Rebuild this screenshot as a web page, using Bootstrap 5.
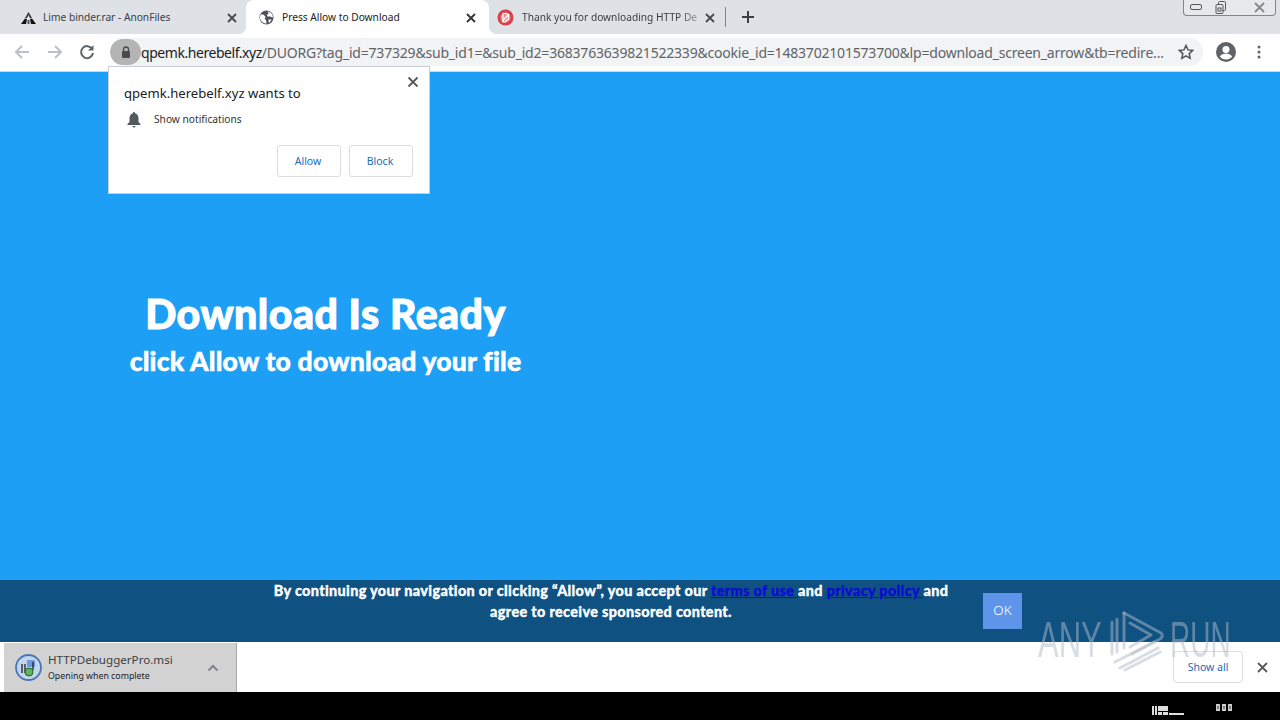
<!DOCTYPE html>
<html lang="en">
<head>
<meta charset="utf-8">
<title>Press Allow to Download</title>
<link href="https://cdn.jsdelivr.net/npm/bootstrap@5.3.0/dist/css/bootstrap.min.css" rel="stylesheet">
<script src="https://cdn.jsdelivr.net/npm/bootstrap@5.3.0/dist/js/bootstrap.bundle.min.js"></script>
<style>
html,body{height:720px;overflow:hidden;margin:0}
body{font-family:"Noto Sans","Liberation Sans",sans-serif;color:#333;background:#000}
.shell{width:1280px;height:720px}
.tabstrip{height:34px;background:#dee1e6;padding-left:8px}
.tabitem{height:34px;font-size:10.2px;color:#3c4043;white-space:nowrap;padding-top:1px}
.tabitem svg{flex:none}
.tab-a{width:238px;padding:1px 9px 0 12px}
.tab-a .tab-title{margin-left:6px}
.tab-b{width:243px;padding:1px 13px 0 13px;background:#fff;border-radius:8px 8px 0 0;color:#202124;position:relative}
.tab-b::before,.tab-b::after{content:"";position:absolute;bottom:0;width:8px;height:8px}
.tab-b::before{left:-8px;background:radial-gradient(circle at 0 0,#dee1e6 8px,#fff 8.500px)}
.tab-b::after{right:-8px;background:radial-gradient(circle at 100% 0,#dee1e6 8px,#fff 8.500px)}
.tab-c{width:233px;padding:1px 7px 0 8px}
.tab-title{flex:1;margin-left:7px;min-width:0}
.tab-b .tab-title{margin-left:8px}
.tab-c .tab-title{-webkit-mask-image:linear-gradient(90deg,#000 86%,rgba(0,0,0,.15));mask-image:linear-gradient(90deg,#000 86%,rgba(0,0,0,.15));margin-left:8px}
.tabsep{width:1px;height:20px;background:#80868b;margin:0 15px 0 3px}
.winctl{width:93px;height:16px;margin-left:auto;margin-right:4px;border:1px solid #80868b;border-top:0;border-radius:0 0 4px 4px;align-self:flex-start;background:#e6e8ec;padding-left:6px}
.winctl svg{display:block}
.wc1{margin-right:13px}
.wc2{margin-right:26px}
.toolbar{height:38px;background:#fff;padding:4px 0 5px 13px;border-bottom:1px solid #d3d5d9}
.navbtns{width:97px;gap:12px}
.navbtns svg:last-child{margin-left:2px}
.omni{width:1093px;height:28px;background:#f1f3f4;border-radius:14px;font-size:14px;white-space:nowrap;overflow:hidden;color:#5f6368}
.lockpill{width:31px;height:26px;background:#b4b4b4;border-radius:13px;flex:none}
.urltext{flex:1;min-width:0;letter-spacing:-.2px}
.urltext b{font-weight:400;color:#202124;letter-spacing:-.45px}
.omni svg{flex:none}
.starbox{margin:0 9px 0 6px}
.tbright{margin-left:13px;gap:21px}
.pagearea{flex:1;background:#1c9ff5;min-height:0;position:relative}
.heroarea{flex:1;padding:220px 0 0 129px}
.heroinner{width:393px;text-align:center;color:#fff;font-family:Lato,"Open Sans",sans-serif;font-weight:900}
.heroone{font-size:41px;line-height:44px;margin:0;font-weight:900;letter-spacing:.5px;white-space:nowrap;-webkit-text-stroke:1px #fff}
.herotwo{font-size:26.5px;line-height:30px;margin:10px 0 0;font-weight:900;white-space:nowrap;letter-spacing:.2px;-webkit-text-stroke:.5px #fff}
.consent{height:62px;background:#0f5282;color:#fff;position:relative}
.consenttext{width:690px;margin-left:266px;text-align:center;font-family:Lato,sans-serif;font-weight:900;font-size:14.4px;line-height:21px;letter-spacing:.35px;align-self:flex-start;-webkit-text-stroke:.3px currentColor}
.consenttext a{color:#0b0bd6}
.okbtn{width:39px;height:36px;background:#5e95ea;color:#fff;font-size:13.5px;font-weight:300;border:0;border-radius:0;margin-left:27px;padding:0 0 2px;font-family:"Noto Sans",sans-serif}
.permpop{position:absolute;left:108px;top:-6px;width:322px;height:128px;background:#fff;border:1px solid #c8cdd2;z-index:3}
.permtitle{font-size:13.1px;color:#202124;position:absolute;left:15px;top:16px;line-height:20px;white-space:nowrap}
.permrow{position:absolute;left:17px;top:44px;font-size:10.2px;color:#333;gap:12px;line-height:17px}
.permclose{position:absolute;right:10px;top:9px}
.permbtns{position:absolute;right:16px;top:78px;gap:8px}
.pbtn{width:64px;height:32px;padding:1px 2px 0 0;border:1px solid #dadce0;border-radius:3px;background:#fff;color:#1a6bb8;font-size:10.5px}
.wmark{position:absolute;left:1037px;top:608px;width:200px;height:70px;z-index:5;pointer-events:none}
.wmarktext{font-family:"Liberation Sans",sans-serif;font-size:50px;color:rgba(175,188,200,.5);line-height:50px;position:absolute;top:7px;white-space:nowrap;transform-origin:left}
.wmark-any{left:1px;transform:scaleX(.62)}
.wmark-run{left:133px;transform:scaleX(.56)}
.wmark svg{position:absolute;left:73px;top:2px}
.dlbar{height:50px;background:#fff;position:relative}
.dlchip{width:233px;height:49px;margin-left:4px;background:#d2d2d2;border-right:1px solid #aaa;padding-left:11px;gap:6px;align-self:flex-start;margin-top:1px}
.dlname{font-size:11.6px;color:#3c4043;line-height:16px}
.dlsub{font-size:8.8px;color:#202124;line-height:13px;margin-top:2px}
.dlcaret{margin-left:auto;margin-right:17px}
.showall{width:70px;height:32px;padding:1px 0 0;border:1px solid #dadce0;border-radius:4px;background:#fff;color:#1a6bb8;font-size:10.5px;margin-left:auto;margin-right:14px}
.dlx{margin-right:12px}
.taskbar{height:28px;background:#000;position:relative}
.tray1{position:absolute;left:1152px;top:14px;width:32px;height:9px}
.tray2{position:absolute;left:1216px;top:11px;width:16px;height:9px}
</style>
</head>
<body>
<div class="shell d-flex flex-column">
  <div class="tabstrip d-flex align-items-center">
    <div class="tabitem tab-a d-flex align-items-center">
      <svg width="17" height="14" viewBox="0 0 17 14"><path d="M8.500 1 L12 7 L10 7 L8.500 4 L7 7 L5 7Z" fill="#333"/><path d="M1 13 L5 7.500 L7 8 L6 13Z M11 13 L10 8 L12 7.500 L16 13Z" fill="#111"/><path d="M7.500 13V9h2v4z" fill="#555"/></svg>
      <span class="tab-title">Lime binder.rar - AnonFiles</span>
      <svg width="10" height="10" viewBox="0 0 10 10"><path d="M1 1l8 8M9 1l-8 8" stroke="#45494d" stroke-width="1.800"/></svg>
    </div>
    <div class="tabitem tab-b d-flex align-items-center">
      <svg width="15" height="15" viewBox="0 0 16 16"><circle cx="8" cy="8" r="7.500" fill="#4f5357"/><path d="M2 4.500l3 .5 2 2.500-1 1.500 1.500 2 .5 3.500C4.500 14.500 1 11.500 1 8c0-1 .3-2.500 1-3.500zM9 1.500l1.500 2-2 1.500.5 2h3l1 .5 1.800.5c.2-3.500-2-6-5.800-6.500zM10.500 10h3l-2.500 3.500-1-1z" fill="#fff"/></svg>
      <span class="tab-title">Press Allow to Download</span>
      <svg width="10" height="10" viewBox="0 0 10 10"><path d="M1 1l8 8M9 1l-8 8" stroke="#303336" stroke-width="1.800"/></svg>
    </div>
    <div class="tabitem tab-c d-flex align-items-center">
      <svg width="17" height="17" viewBox="0 0 17 17"><circle cx="8.500" cy="8.500" r="8" fill="#d8404a"/><circle cx="8.500" cy="8.500" r="5" fill="#ee8f96"/><path d="M6 4.500h3.500l2 2V10L8 13H6z" fill="none" stroke="#fff" stroke-width="1.200"/><path d="M5 12.500L12 5" stroke="#fff" stroke-width="1.300"/></svg>
      <span class="tab-title">Thank you for downloading HTTP De</span>
      <svg width="10" height="10" viewBox="0 0 10 10"><path d="M1 1l8 8M9 1l-8 8" stroke="#45494d" stroke-width="1.800"/></svg>
    </div>
    <div class="tabsep"></div>
    <svg width="14" height="14" viewBox="0 0 14 14"><path d="M7 1v12M1 7h12" stroke="#3c4043" stroke-width="2"/></svg>
    <div class="winctl d-flex align-items-center">
      <svg class="wc1" width="12" height="7" viewBox="0 0 12 7"><rect x=".5" y=".5" width="11" height="5" rx="1.500" fill="none" stroke="#555"/></svg>
      <svg class="wc2" width="12" height="13" viewBox="0 0 12 13"><rect x="3.500" y=".5" width="7" height="9" rx="1" fill="none" stroke="#555"/><rect x="1" y="3.500" width="7" height="9" rx="1" fill="#e6e8ec" stroke="#555"/><rect x="3" y="7" width="3" height="3" fill="none" stroke="#555"/></svg>
      <svg width="13" height="11" viewBox="0 0 13 11"><path d="M2 1l9 9M11 1l-9 9" stroke="#888" stroke-width="1.800"/></svg>
    </div>
  </div>
  <div class="toolbar d-flex align-items-center">
    <div class="navbtns d-flex align-items-center">
      <svg width="20" height="16" viewBox="0 0 20 16"><path d="M16 8H3M9 2L3 8l6 6" fill="none" stroke="#bcc0c4" stroke-width="2"/></svg>
      <svg width="20" height="16" viewBox="0 0 20 16"><path d="M3 8h13M10 2l6 6-6 6" fill="none" stroke="#bcc0c4" stroke-width="2"/></svg>
      <svg width="16" height="16" viewBox="0 0 16 16"><path d="M13.200 5A6 6 0 1 0 14 9" fill="none" stroke="#5f6368" stroke-width="2"/><path d="M14.500 1v5.500H9z" fill="#5f6368"/></svg>
    </div>
    <div class="omni d-flex align-items-center">
      <div class="lockpill d-flex align-items-center justify-content-center">
        <svg width="10" height="12" viewBox="0 0 10 12"><path d="M2.500 5V3.500a2.500 2.500 0 0 1 5 0V5" fill="none" stroke="#4a4a4a" stroke-width="1.300"/><rect x="1" y="5" width="8" height="7" rx="1" fill="#4a4a4a"/></svg>
      </div>
      <div class="urltext"><b>qpemk.herebelf.xyz</b>/DUORG?tag_id=737329&amp;sub_id1=&amp;sub_id2=3683763639821522339&amp;cookie_id=1483702101573700&amp;lp=download_screen_arrow&amp;tb=redire...</div>
      <svg class="starbox" width="16" height="16" viewBox="0 0 16 16"><path d="M8 1.500l2 4.400 4.700.5-3.500 3.200 1 4.700L8 11.900l-4.200 2.400 1-4.700L1.300 6.400 6 5.900z" fill="none" stroke="#50555a" stroke-width="1.500"/></svg>
    </div>
    <div class="tbright d-flex align-items-center">
      <svg width="20" height="20" viewBox="0 0 20 20"><circle cx="10" cy="10" r="10" fill="#5f6368"/><circle cx="10" cy="7.500" r="3.500" fill="#fff"/><path d="M3.800 14.500c1.500-2.300 4-3 6.200-3s4.700.7 6.200 3c-1.500 2-3.700 3-6.200 3s-4.700-1-6.200-3z" fill="#fff"/></svg>
      <svg width="4" height="14" viewBox="0 0 4 14"><circle cx="2" cy="2" r="1.500" fill="#5f6368"/><circle cx="2" cy="7" r="1.500" fill="#5f6368"/><circle cx="2" cy="12" r="1.500" fill="#5f6368"/></svg>
    </div>
  </div>
  <div class="pagearea d-flex flex-column">
    <div class="permpop">
      <div class="permtitle">qpemk.herebelf.xyz wants to</div>
      <svg class="permclose" width="12" height="12" viewBox="0 0 12 12"><path d="M1.500 1.500l9 9M10.500 1.500l-9 9" stroke="#55585c" stroke-width="1.800"/></svg>
      <div class="permrow d-flex align-items-center">
        <svg width="16" height="17" viewBox="0 0 16 17"><path d="M8 1c.7 0 1 .5 1 1.200C11.500 3 12.500 5 12.500 7.500v3.500L14.500 13v1h-13v-1l2-2V7.500C3.500 5 4.500 3 7 2.200 7 1.500 7.300 1 8 1z" fill="#55585c"/><path d="M6.500 15h3a1.500 1.500 0 0 1-3 0z" fill="#55585c"/></svg>
        <span>Show notifications</span>
      </div>
      <div class="permbtns d-flex">
        <button type="button" class="btn pbtn">Allow</button>
        <button type="button" class="btn pbtn">Block</button>
      </div>
    </div>
    <div class="heroarea">
      <div class="heroinner">
        <h1 class="heroone">Download Is Ready</h1>
        <p class="herotwo">click Allow to download your file</p>
      </div>
    </div>
    <div class="consent d-flex align-items-center">
      <div class="consenttext">By continuing your navigation or clicking “Allow”, you accept our <a href="#">terms of use </a>and <a href="#">privacy policy </a>and agree to receive sponsored content.</div>
      <button type="button" class="btn okbtn">OK</button>
    </div>
  </div>
  <div class="dlbar d-flex align-items-center">
    <div class="dlchip d-flex align-items-center">
      <svg width="27" height="27" viewBox="0 0 27 27"><circle cx="13.500" cy="13.500" r="12.500" fill="#c3d5ea" stroke="#4a74b8" stroke-width="1.800"/><rect x="12" y="6" width="8" height="7" fill="#6a9bd8"/><path d="M7 10v9M10 10v9M18 8v8" stroke="#222" stroke-width="1.300"/><circle cx="14" cy="18" r="4" fill="#5fb45f" stroke="#26662a"/></svg>
      <div>
        <div class="dlname">HTTPDebuggerPro.msi</div>
        <div class="dlsub">Opening when complete</div>
      </div>
      <svg class="dlcaret" width="12" height="8" viewBox="0 0 12 8"><path d="M1.500 6.500L6 2l4.500 4.500" fill="none" stroke="#80848a" stroke-width="2"/></svg>
    </div>
    <button type="button" class="btn showall">Show all</button>
    <svg class="dlx" width="11" height="11" viewBox="0 0 11 11"><path d="M1 1l9 9M10 1l-9 9" stroke="#55585c" stroke-width="1.800"/></svg>
  </div>
  <div class="taskbar">
    <svg class="tray1" viewBox="0 0 32 9"><path d="M0 0h2v9H0zM3 0h2v9H3zM6 0h10v5H6zM6 6h4v3H6zM11 6h5v3h-5zM17 7h15v2H17z" fill="#ddd"/></svg>
    <svg class="tray2" viewBox="0 0 16 9"><path d="M0 1h4v7H0zM6 1h4v7H6zM12 1h4v7h-4z" fill="#ccc"/><path d="M1.500 3h1v3h-1zM7.500 3h1v3h-1zM13.500 3h1v3h-1z" fill="#333"/></svg>
  </div>
  <div class="wmark">
    <span class="wmarktext wmark-any">ANY</span>
    <svg width="56" height="62" viewBox="0 0 56 62" fill="none" stroke="rgba(175,188,200,.5)" stroke-width="3" stroke-linecap="round" stroke-linejoin="round"><path d="M2 12V44M7 9V42"/><path d="M14 3V38"/><path d="M14 3L51 23Q54 26 50 29L22 44"/><path d="M20 13L41 25 20 37"/><path d="M5 52L44 32M10 58L48 38M15 60L50 42"/></svg>
    <span class="wmarktext wmark-run">RUN</span>
  </div>
</div>
</body>
</html>
